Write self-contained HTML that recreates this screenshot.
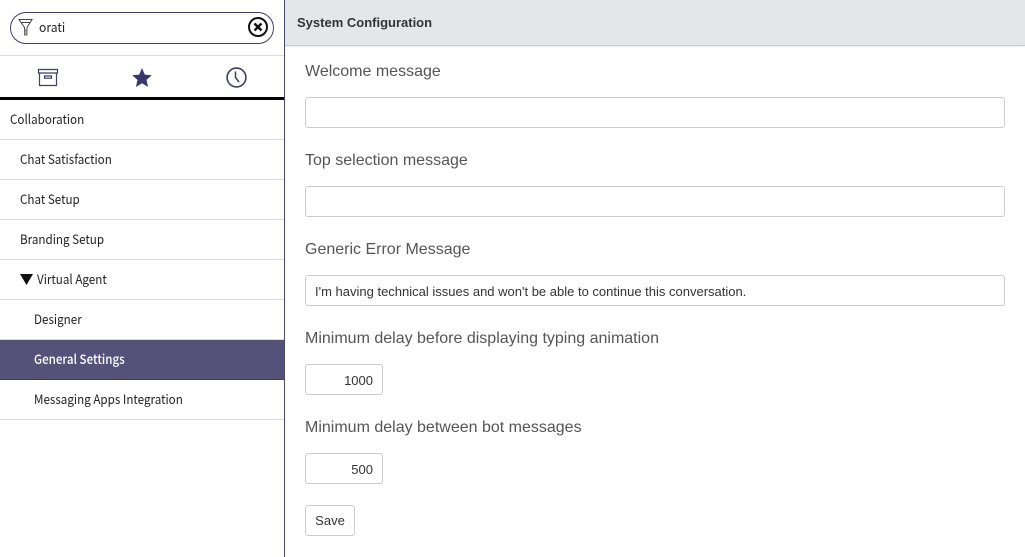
<!DOCTYPE html>
<html>
<head>
<meta charset="utf-8">
<style>
html,body{margin:0;padding:0;width:1025px;height:557px;overflow:hidden;background:#fff;}
body{position:relative;font-family:"Liberation Sans",sans-serif;}
.a{position:absolute;}
#side{left:0;top:0;width:284px;height:557px;border-right:1px solid #4b4a6b;font-family:"Noto Sans CJK SC","Liberation Sans",sans-serif;font-size:13px;color:#222;}
.row{position:absolute;left:0;width:284px;height:39px;line-height:38px;border-bottom:1px solid #dcdcdc;white-space:nowrap;}
.row span{transform:scaleX(.895);transform-origin:0 50%;}
.lab{position:absolute;left:305px;font-size:16px;line-height:20px;color:#555;white-space:nowrap;}
.inp{position:absolute;left:305px;width:698px;height:29px;border:1px solid #ccc;border-radius:3px;background:#fff;font-size:13px;line-height:32px;color:#333;white-space:nowrap;}
.num{position:absolute;left:305px;width:76px;height:29px;border:1px solid #ccc;border-radius:3px;font-size:13px;line-height:32px;text-align:right;color:#333;}
</style>
</head>
<body>
<div id="side" class="a">
  <div class="a" style="left:10px;top:12px;width:262px;height:30px;border:1px solid #3f3f66;border-radius:16px;"></div>
  <svg class="a" style="left:17px;top:17px" width="18" height="20" viewBox="0 0 18 20" fill="none" stroke="#444" stroke-width="1">
    <path d="M2 2.5H15L10 10.5V13H7.5V10.5Z"/><path d="M3.5 5.5H13.5"/><path d="M7.5 13H10V18H7.5Z" fill="#aaa" stroke="#666"/>
  </svg>
  <div class="a" style="left:39px;top:17px;font-size:13px;line-height:20px;color:#222;transform:scaleX(.93);transform-origin:0 50%;">orati</div>
  <svg class="a" style="left:247px;top:17px" width="22" height="20" viewBox="0 0 22 20" fill="none" stroke="#111">
    <circle cx="11" cy="10" r="9" stroke-width="2"/><path d="M7.5 6.5L14.5 13.5M14.5 6.5L7.5 13.5" stroke-width="2.4"/>
  </svg>
  <div class="a" style="left:0;top:55px;width:284px;height:1px;background:#dcdcdc;"></div>
  <svg class="a" style="left:37px;top:68px" width="22" height="19" viewBox="0 0 22 19" fill="none" stroke="#3f3f66" stroke-width="1.2">
    <path d="M1.5 1.5H20.5V5H1.5Z"/><path d="M2.5 5V17.5H19.5V5"/><path d="M7.5 8H14.5V10.2H7.5Z"/>
  </svg>
  <svg class="a" style="left:131px;top:67px" width="22" height="21" viewBox="0 0 22 21">
    <path fill="#36386e" d="M11 1L13.8 7.6L20.8 8.2L15.5 12.9L17.1 20L11 16.2L4.9 20L6.5 12.9L1.2 8.2L8.2 7.6Z"/>
  </svg>
  <svg class="a" style="left:226px;top:67px" width="21" height="21" viewBox="0 0 21 21" fill="none" stroke="#3f3f66">
    <circle cx="10.5" cy="10.5" r="9.4" stroke-width="1.6"/><path d="M9.5 4.5V10.5L13 15" stroke-width="1.5"/>
  </svg>
  <div class="a" style="left:0;top:97px;width:284px;height:3px;background:#000;"></div>

  <div class="row" style="top:100px;"><span class="a" style="left:10px;">Collaboration</span></div>
  <div class="row" style="top:140px;"><span class="a" style="left:20px;">Chat Satisfaction</span></div>
  <div class="row" style="top:180px;"><span class="a" style="left:20px;">Chat Setup</span></div>
  <div class="row" style="top:220px;"><span class="a" style="left:20px;">Branding Setup</span></div>
  <div class="row" style="top:260px;">
    <svg class="a" style="left:20px;top:14px" width="13" height="11" viewBox="0 0 13 11"><path d="M0 0H13L6.5 11Z" fill="#111"/></svg>
    <span class="a" style="left:37px;">Virtual Agent</span>
  </div>
  <div class="row" style="top:300px;"><span class="a" style="left:34px;">Designer</span></div>
  <div class="row" style="top:340px;background:#545278;border-bottom:1px solid #3f3f5c;color:#fff;font-weight:500;"><span class="a" style="left:34px;transform:scaleX(.89);">General Settings</span></div>
  <div class="row" style="top:380px;"><span class="a" style="left:34px;">Messaging Apps Integration</span></div>
</div>

<div class="a" style="left:285px;top:0;width:740px;height:45px;background:#e4e7ea;border-bottom:1px solid #c9cbce;box-shadow:0 1px 2px rgba(0,0,0,.08);"></div>
<div class="a" style="left:297px;top:13px;font-size:13px;font-weight:700;line-height:20px;color:#333;white-space:nowrap;">System Configuration</div>

<div class="lab" style="top:62px;">Welcome message</div>
<div class="inp" style="top:97px;"></div>
<div class="lab" style="top:151px;">Top selection message</div>
<div class="inp" style="top:186px;"></div>
<div class="lab" style="top:240px;">Generic Error Message</div>
<div class="inp" style="top:275px;"><span style="margin-left:9px;">I'm having technical issues and won't be able to continue this conversation.</span></div>
<div class="lab" style="top:329px;">Minimum delay before displaying typing animation</div>
<div class="num" style="top:364px;"><span style="margin-right:9px;">1000</span></div>
<div class="lab" style="top:418px;">Minimum delay between bot messages</div>
<div class="num" style="top:453px;"><span style="margin-right:9px;">500</span></div>
<div class="a" style="left:305px;top:505px;width:48px;height:29px;border:1px solid #ccc;border-radius:3px;font-size:13px;line-height:29px;text-align:center;color:#333;">Save</div>
</body>
</html>
